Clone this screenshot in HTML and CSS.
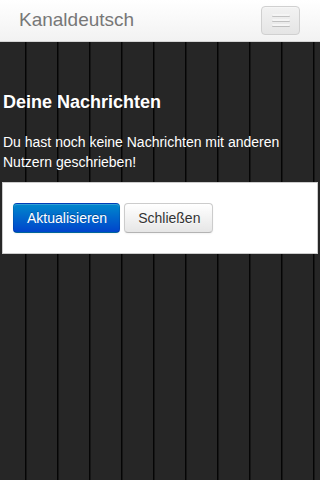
FILE: index.html
```html
<!DOCTYPE html>
<html lang="de">
<head>
<meta charset="UTF-8" />
<meta name="viewport" content="width=device-width, initial-scale=1" />
<title>Kanaldeutsch - Nachrichten</title>
<link rel="stylesheet" href="styles.css">
</head>
<body>

<!-- NAVBAR -->
<header class="navbar">
  <a class="brand" href="#">Kanaldeutsch</a>
  <button class="btn-navbar" aria-label="Menü">
    <span class="icon-bar"></span>
    <span class="icon-bar"></span>
    <span class="icon-bar"></span>
  </button>
</header>

<!-- MESSAGES -->
<main class="content">
  <h4>Deine Nachrichten</h4>
  <p>Du hast noch keine Nachrichten mit anderen Nutzern geschrieben!</p>

  <div class="panel">
    <button class="btn btn-primary">Aktualisieren</button>
    <button class="btn">Schließen</button>
  </div>
</main>

</body>
</html>
```

FILE: styles.css
```css
/* Reset and base */
* {
  box-sizing: border-box;
}
body {
  margin: 0;
  font-family: "Liberation Sans", Arial, sans-serif;
  font-size: 14px;
  line-height: 20px;
  color: #fff;
  min-height: 480px;
  background-color: #262626;
  background-image: linear-gradient(to right, transparent 25px, #050505 25px, #050505 26px, #161616 26px, #161616 27px, transparent 27px);
  background-size: 32px 100%;
}

/* Navbar */
.navbar {
  height: 42px;
  display: flex;
  align-items: center;
  justify-content: space-between;
  padding: 0 20px 0 19px;
  background: linear-gradient(to bottom, #ffffff, #f2f2f2);
  border-bottom: 1px solid #d4d4d4;
}
.brand {
  font-size: 19px;
  color: #777;
  text-decoration: none;
  margin-top: -1px;
}
.btn-navbar {
  width: 39px;
  height: 29px;
  margin-top: -1px;
  padding: 0;
  display: flex;
  flex-direction: column;
  align-items: center;
  justify-content: center;
  gap: 3px;
  background: linear-gradient(to bottom, #f2f2f2, #e5e5e5);
  border: 1px solid #d0d0d0;
  border-radius: 4px;
  box-shadow: inset 0 1px 0 rgba(255,255,255,0.3), 0 1px 0 rgba(255,255,255,0.1);
}
.icon-bar {
  display: block;
  width: 18px;
  height: 2px;
  background-color: #f5f5f5;
  box-shadow: 0 1px 0 rgba(0,0,0,0.18);
  border-radius: 1px;
}

/* Content */
.content {
  padding: 0 2px;
}
h4 {
  margin: 50px 0 20px;
  padding-left: 1px;
  font-size: 18px;
  line-height: 20px;
  font-weight: bold;
}
p {
  margin: 0 0 10px;
  padding-left: 1px;
}

.panel {
  background: #fff;
  border: 1px solid #ccc;
  padding: 20px 10px;
  display: flex;
  gap: 4px;
}

/* Buttons */
.btn {
  font-family: "Liberation Sans", Arial, sans-serif;
  font-size: 14px;
  line-height: 20px;
  padding: 4px 12px 4px 13px;
  color: #333;
  text-shadow: 0 1px 1px rgba(255,255,255,0.75);
  background: linear-gradient(to bottom, #ffffff, #e6e6e6);
  border: 1px solid #cccccc;
  border-bottom-color: #b3b3b3;
  border-radius: 4px;
  box-shadow: inset 0 1px 0 rgba(255,255,255,0.2), 0 1px 2px rgba(0,0,0,0.05);
  cursor: pointer;
}
.btn-primary {
  color: #fff;
  text-shadow: 0 -1px 0 rgba(0,0,0,0.25);
  background: linear-gradient(to bottom, #0088cc, #0044cc);
  border-color: rgba(0,0,0,0.1) rgba(0,0,0,0.1) rgba(0,0,0,0.25);
}
```
